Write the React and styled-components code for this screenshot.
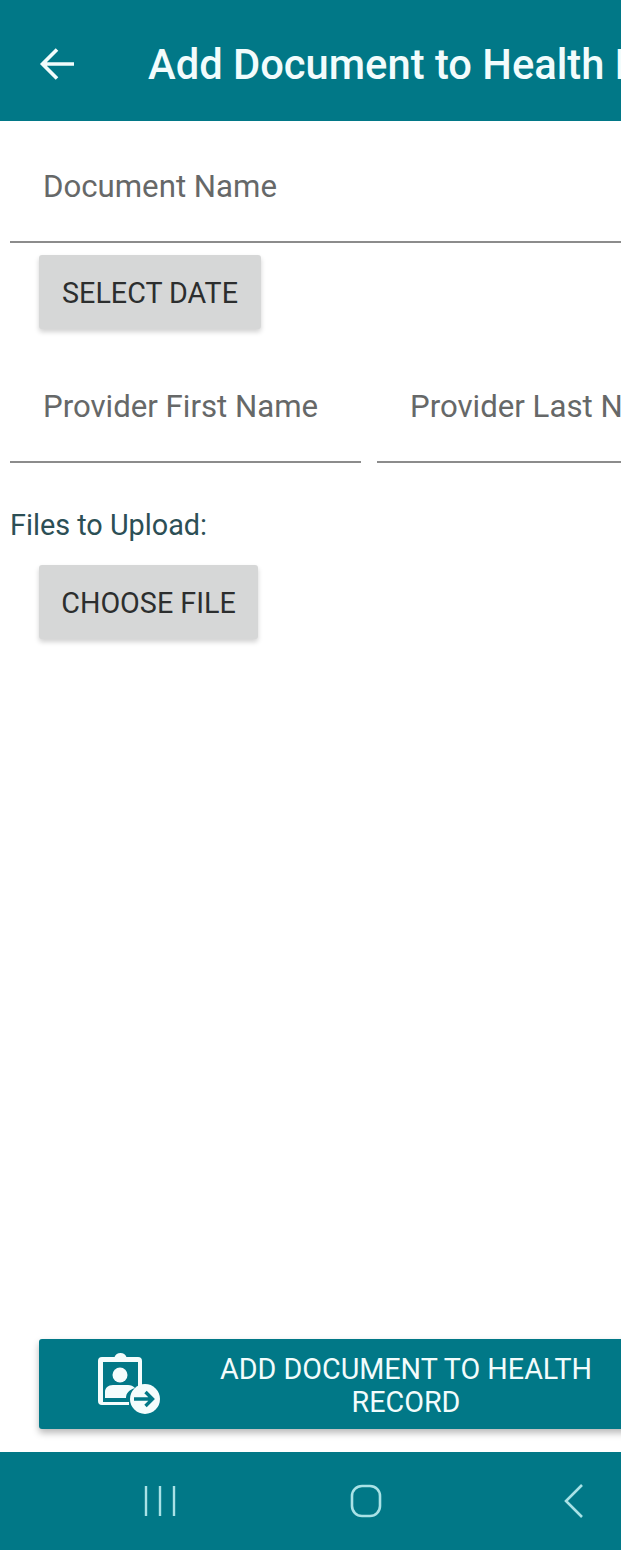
import React from "react";
import styled, { createGlobalStyle } from "styled-components";

const teal = "#017887";

const GlobalStyle = createGlobalStyle`
  html, body {
    margin: 0;
    padding: 0;
    background: #fff;
    overflow: hidden;
  }
  * { box-sizing: border-box; }
`;

const Screen = styled.div`
  width: 621px;
  height: 1550px;
  display: flex;
  flex-direction: column;
  overflow: hidden;
  background: #fff;
  font-family: Roboto, "Liberation Sans", sans-serif;
`;

const Header = styled.header`
  flex: none;
  height: 121px;
  display: flex;
  align-items: center;
  background: ${teal};
  padding: 7px 0 0 39px;
  white-space: nowrap;
`;

const BackButton = styled.div`
  flex: none;
  width: 109px;
  height: 38px;
  display: flex;
  align-items: center;
`;

const Title = styled.h1`
  margin: 2px 0 0;
  color: #f2fcfc;
  font-size: 41.7px;
  font-weight: 500;
  line-height: 48px;
`;

const Content = styled.main`
  flex: 1;
  display: flex;
  flex-direction: column;
  min-height: 0;
`;

const FieldRow = styled.div`
  display: flex;
  gap: 16px;
  padding-left: 10px;
  width: 800px;
`;

const Field = styled.div`
  flex: ${(p) => (p.$width ? `0 0 ${p.$width}px` : "1")};
  height: ${(p) => p.$height}px;
  display: flex;
  align-items: flex-start;
  padding: ${(p) => p.$top}px 0 0 33px;
  border-bottom: 2px solid #8c8c8c;
  color: #666868;
  font-size: 31.2px;
  line-height: 36px;
  white-space: nowrap;
`;

const GreyButton = styled.div`
  height: 74px;
  width: ${(p) => p.$width}px;
  margin: ${(p) => p.$margin};
  padding-top: 2px;
  display: flex;
  align-items: center;
  justify-content: center;
  border-radius: 3px;
  background: #d6d7d7;
  box-shadow: 0 3px 5px rgba(0, 0, 0, 0.18);
  color: #2c2e2e;
  font-size: 28.7px;
  white-space: nowrap;
`;

const SectionLabel = styled.div`
  margin: 45px 0 0 10px;
  height: 34px;
  color: #2c4f55;
  font-size: 28.8px;
  line-height: 34px;
`;

const Spacer = styled.div`
  flex: 1;
`;

const SubmitButton = styled.div`
  flex: none;
  width: 700px;
  height: 90px;
  margin: 0 0 23px 39px;
  display: flex;
  align-items: center;
  padding-left: 58px;
  border-radius: 3px 0 0 3px;
  background: ${teal};
  box-shadow: 0 4px 7px rgba(0, 0, 0, 0.28);
`;

const SubmitLabel = styled.div`
  width: 400px;
  margin: 3px 0 0 45px;
  text-align: center;
  color: #f2fcfc;
  font-size: 28.7px;
  line-height: 33px;
`;

const NavBar = styled.nav`
  flex: none;
  height: 98px;
  display: flex;
  align-items: center;
  background: ${teal};
  padding-bottom: 1px;
`;

const NavSlot = styled.div`
  flex: none;
  margin-left: ${(p) => p.$left}px;
  display: flex;
`;

const BackArrow = () => (
  <svg width="38" height="34" viewBox="0 0 38 34" fill="none">
    <path
      d="M35 17H4M18 2.5 3.5 17 18 31.5"
      stroke="#f2fcfc"
      strokeWidth="3.6"
    />
  </svg>
);

const RecordIcon = () => (
  <svg width="64" height="64" viewBox="0 0 64 64" fill="none">
    <path
      d="M5 5h12.5a6.5 6.5 0 0 1 12 0H41a4 4 0 0 1 4 4v26h-4V10H6v40h26v3H5a4 4 0 0 1-4-4V9a4 4 0 0 1 4-4z"
      fill="#f4fcfc"
    />
    <circle cx="23" cy="23" r="7.5" fill="#f4fcfc" />
    <path d="M8 46v-6c0-4 3-7 8-7h15c3 0 5 1 7 3-6 2-9 5-9 10z" fill="#f4fcfc" />
    <circle cx="48" cy="47" r="15" fill="#f4fcfc" />
    <path d="M37 47h19M48.5 40 55.5 47 48.5 54" stroke={teal} strokeWidth="3.4" />
  </svg>
);

const MenuIcon = () => (
  <svg width="32" height="32" viewBox="0 0 32 32" fill="none">
    <path d="M2 1v30M16 1v30M30 1v30" stroke="#a9e2e6" strokeWidth="2.4" />
  </svg>
);

const HomeIcon = () => (
  <svg width="32" height="34" viewBox="0 0 32 34" fill="none">
    <rect x="2" y="2" width="28" height="30" rx="10" stroke="#a9e2e6" strokeWidth="2.6" />
  </svg>
);

const ChevronIcon = () => (
  <svg width="20" height="34" viewBox="0 0 20 34" fill="none">
    <path d="M18 1 2 17l16 16" stroke="#a9e2e6" strokeWidth="2.6" />
  </svg>
);

export default function App() {
  return (
    <Screen>
      <GlobalStyle />
      <Header>
        <BackButton>
          <BackArrow />
        </BackButton>
        <Title>Add Document to Health Record</Title>
      </Header>
      <Content>
        <FieldRow>
          <Field $height={122} $top={48}>Document Name</Field>
        </FieldRow>
        <GreyButton $width={222} $margin="12px 0 0 39px">SELECT DATE</GreyButton>
        <FieldRow>
          <Field $width={351} $height={134} $top={60}>Provider First Name</Field>
          <Field $height={134} $top={60}>Provider Last Name</Field>
        </FieldRow>
        <SectionLabel>Files to Upload:</SectionLabel>
        <GreyButton $width={219} $margin="23px 0 0 39px">CHOOSE FILE</GreyButton>
        <Spacer />
        <SubmitButton>
          <RecordIcon />
          <SubmitLabel>ADD DOCUMENT TO HEALTH RECORD</SubmitLabel>
        </SubmitButton>
      </Content>
      <NavBar>
        <NavSlot $left={144}><MenuIcon /></NavSlot>
        <NavSlot $left={174}><HomeIcon /></NavSlot>
        <NavSlot $left={182}><ChevronIcon /></NavSlot>
      </NavBar>
    </Screen>
  );
}
